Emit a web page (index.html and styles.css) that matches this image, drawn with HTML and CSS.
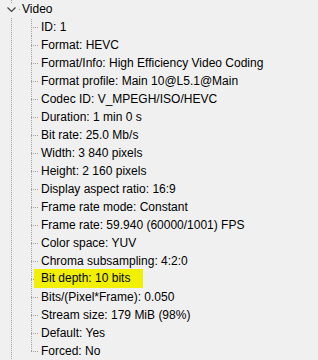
FILE: index.html
```html
<!DOCTYPE html>
<html>

<head>
    <meta charset="utf-8">
    <title>Media Info</title>
    <link rel="stylesheet" href="styles.css">
</head>

<body>
    <div class="tree">
        <div class="root">
            <span class="toggle">
                <svg width="9" height="6" viewBox="0 0 9 6">
                    <polyline points="0.5,0.5 4.5,4.5 8.5,0.5" fill="none" stroke="#404040" stroke-width="1.2"/>
                </svg>
            </span>
            <span class="stub"></span>
            <span class="label">Video</span>
        </div>
        <ul class="children">
            <li>ID: 1</li>
            <li>Format: HEVC</li>
            <li>Format/Info: High Efficiency Video Coding</li>
            <li>Format profile: Main 10@L5.1@Main</li>
            <li>Codec ID: V_MPEGH/ISO/HEVC</li>
            <li>Duration: 1 min 0 s</li>
            <li>Bit rate: 25.0 Mb/s</li>
            <li>Width: 3 840 pixels</li>
            <li>Height: 2 160 pixels</li>
            <li>Display aspect ratio: 16:9</li>
            <li>Frame rate mode: Constant</li>
            <li>Frame rate: 59.940 (60000/1001) FPS</li>
            <li>Color space: YUV</li>
            <li>Chroma subsampling: 4:2:0</li>
            <li><span class="hl">Bit depth: 10 bits</span></li>
            <li>Bits/(Pixel*Frame): 0.050</li>
            <li>Stream size: 179 MiB (98%)</li>
            <li>Default: Yes</li>
            <li>Forced: No</li>
        </ul>
    </div>
</body>

</html>
```

FILE: styles.css
```css
body {
    margin: 0;
    padding: 0;
    background-color: #f0f0f0;
    font-family: "Liberation Sans", Arial, sans-serif;
    font-size: 12px;
    color: #000;
}

.tree {
    height: 360px;
    overflow: hidden;
    background-image: repeating-linear-gradient(to bottom, #a0a0a0 0 1px, transparent 1px 2px);
    background-size: 1px 100%;
    background-position: 11px 0;
    background-repeat: no-repeat;
}

.root {
    display: flex;
    align-items: center;
    height: 18px;
}

.toggle {
    display: flex;
    align-items: center;
    justify-content: center;
    width: 17px;
    height: 14px;
    margin: 3px 0 0 2px;
    padding-left: 0;
    background-color: #f0f0f0;
}

.toggle svg {
    margin-left: 1px;
    margin-top: -2px;
}

.stub {
    width: 1px;
    height: 1px;
    margin-top: 1px;
    background-color: #a0a0a0;
}

.label {
    margin-left: 2px;
}

.children {
    list-style: none;
    margin: 0 0 0 31px;
    padding: 0;
}

.children li {
    position: relative;
    display: flex;
    align-items: flex-start;
    height: 18px;
    line-height: 18px;
    padding-left: 10px;
    white-space: nowrap;
}

.children li::before {
    content: "";
    position: absolute;
    left: 0;
    top: 0;
    width: 1px;
    height: 18px;
    background-image: repeating-linear-gradient(to bottom, #a0a0a0 0 1px, transparent 1px 2px);
}

.children li:first-child::before {
    top: 1px;
    height: 17px;
}

.children li:last-child::before {
    height: 10px;
}

.children li::after {
    content: "";
    position: absolute;
    left: 0;
    top: 9px;
    width: 8px;
    height: 1px;
    background-image: repeating-linear-gradient(to right, #a0a0a0 0 1px, transparent 1px 2px);
}

.hl {
    position: relative;
    z-index: 1;
    display: inline-block;
    height: 19px;
    line-height: 19px;
    margin: -1px 0 0 -7px;
    padding: 0 13px 0 7px;
    background-color: #f0f000;
}
```
